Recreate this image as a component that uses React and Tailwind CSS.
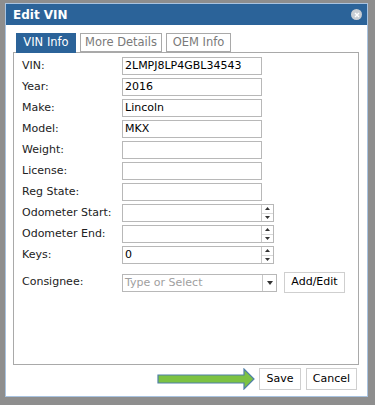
import React from "react";

const font = { fontFamily: '"DejaVu Sans", Verdana, sans-serif' };

const rows = [
  { label: "VIN:", value: "2LMPJ8LP4GBL34543" },
  { label: "Year:", value: "2016" },
  { label: "Make:", value: "Lincoln" },
  { label: "Model:", value: "MKX" },
  { label: "Weight:", value: "" },
  { label: "License:", value: "" },
  { label: "Reg State:", value: "" },
  { label: "Odometer Start:", value: "", spin: true },
  { label: "Odometer End:", value: "", spin: true },
  { label: "Keys:", value: "0", spin: true },
];

const Spinner = () => (
  <div className="w-[12px] h-full border-l border-[#c8c8c8] flex flex-col">
    <div className="flex-1 flex items-center justify-center border-b border-[#d8d8d8]">
      <svg width="5" height="3" viewBox="0 0 5 3">
        <path d="M0 3 L2.5 0 L5 3 Z" fill="#333" />
      </svg>
    </div>
    <div className="flex-1 flex items-center justify-center">
      <svg width="5" height="3" viewBox="0 0 5 3">
        <path d="M0 0 L2.5 3 L5 0 Z" fill="#333" />
      </svg>
    </div>
  </div>
);

const Row = ({ label, value, spin }) => (
  <div className="flex items-center h-[18px]">
    <div className="w-[100px] text-[11px] text-[#222]">{label}</div>
    <div
      className={
        "h-[18px] border border-[#b8b8b8] bg-white flex items-stretch " +
        (spin ? "w-[152px]" : "w-[140px]")
      }
    >
      <div className="flex-1 pl-[2px] text-[11px] leading-[16px] text-black">{value}</div>
      {spin && <Spinner />}
    </div>
  </div>
);

const App = () => {
  return (
    <div className="w-[375px] h-[405px] bg-[#8e8e8e] pt-[3px] pl-[5px]" style={font}>
      <div className="w-[363px] h-[394px] bg-white border border-[#a9c3e0] flex flex-col">
        {/* Title */}
        <div className="h-[21px] bg-[#2b6399] flex items-center justify-between pl-[7px] pr-[5px]">
          <span className="text-white font-bold text-[12px]">Edit VIN</span>
          <div className="w-[11px] h-[11px] rounded-full bg-[#c9ced4] flex items-center justify-center">
            <svg width="6" height="6" viewBox="0 0 6 6">
              <path d="M1 1 L5 5 M5 1 L1 5" stroke="#fff" strokeWidth="1.4" />
            </svg>
          </div>
        </div>

        <div className="pl-[7px] pt-[8px]">
          {/* Tabs */}
          <div className="flex gap-[4px] pl-[3px] h-[19px] relative z-10">
            <div className="w-[60px] h-[20px] bg-[#2b6399] border border-[#2b6399] text-white text-[11.5px] flex items-center justify-center">
              VIN Info
            </div>
            <div className="w-[82px] h-[19px] bg-white border border-[#a9a9a9] text-[#7a7a7a] text-[11.5px] flex items-center justify-center">
              More Details
            </div>
            <div className="w-[65px] h-[19px] bg-white border border-[#a9a9a9] text-[#7a7a7a] text-[11.5px] flex items-center justify-center">
              OEM Info
            </div>
          </div>

          {/* Panel */}
          <div className="w-[346px] h-[313px] border border-[#a9a9a9] pt-[4px] pl-[8px]">
            <div className="flex flex-col gap-[3px]">
              {rows.map((r) => (
                <Row key={r.label} {...r} />
              ))}
            </div>
            <div className="flex items-center mt-[8px]">
              <div className="w-[100px] text-[11px] text-[#222]">Consignee:</div>
              <div className="w-[155px] h-[18px] border border-[#b8b8b8] flex items-stretch">
                <div className="flex-1 pl-[2px] text-[11px] leading-[16px] text-[#a0a0a0]">
                  Type or Select
                </div>
                <div className="w-[14px] border-l border-[#c8c8c8] flex items-center justify-center">
                  <svg width="6" height="4" viewBox="0 0 6 4">
                    <path d="M0 0 L3 4 L6 0 Z" fill="#333" />
                  </svg>
                </div>
              </div>
              <div className="ml-[7px] w-[61px] h-[21px] border border-[#cfcfcf] bg-white text-[11px] text-black flex items-center justify-center">
                Add/Edit
              </div>
            </div>
          </div>

          {/* Footer */}
          <div className="flex items-center justify-end w-[344px] pt-[3px]">
            <svg width="99" height="22" viewBox="0 0 99 22" className="mr-[3px]">
              <path
                d="M1 7 L87 7 L87 1 L97 11 L87 21 L87 15 L1 15 Z"
                fill="#7cc242"
                stroke="#4f7fa8"
                strokeWidth="1.2"
              />
            </svg>
            <div className="w-[42px] h-[22px] border border-[#cfcfcf] text-[11px] text-black flex items-center justify-center">
              Save
            </div>
            <div className="ml-[5px] w-[51px] h-[22px] border border-[#cfcfcf] text-[11px] text-black flex items-center justify-center">
              Cancel
            </div>
          </div>
        </div>
      </div>
    </div>
  );
};

export default App;
